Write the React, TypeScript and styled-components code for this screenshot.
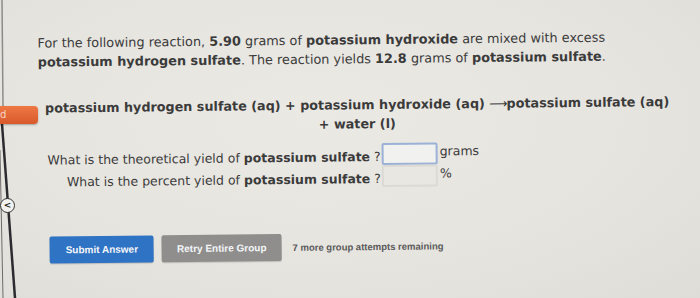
import React from 'react';
import styled, { createGlobalStyle } from 'styled-components';

const GlobalStyle = createGlobalStyle`
  html, body {
    margin: 0;
    padding: 0;
    background: #e7e5e0;
  }
`;

const Screen = styled.div`
  position: relative;
  width: 700px;
  height: 298px;
  overflow: hidden;
  background: radial-gradient(ellipse at 45% 40%, #ebe9e4 0%, #e6e4df 60%, #dfddd8 100%);
  font-family: "DejaVu Sans", Verdana, sans-serif;
  color: #3b3b3b;
`;

const Content = styled.div`
  padding: 34px 0 0 37px;
  transform: rotate(-0.6deg);
  transform-origin: 0 0;
`;

const Intro = styled.p`
  margin: 0;
  width: 590px;
  font-size: 12.85px;
  line-height: 19px;
`;

const Equation = styled.div`
  margin: 27px 0 0 4px;
  width: 630px;
  text-align: center;
  font-size: 12.75px;
  line-height: 19px;
  font-weight: bold;
  white-space: nowrap;
`;

const Arrow = styled.span`
  font-weight: normal;
  letter-spacing: -1px;
`;

const Questions = styled.div`
  display: grid;
  grid-template-columns: 334px 56px auto;
  column-gap: 1px;
  align-items: center;
  margin: 10px 0 0 8px;
  font-size: 12.5px;
`;

const Label = styled.div`
  text-align: right;
  white-space: nowrap;
  padding-top: 5px;
`;

const Field = styled.div<{ $faint?: boolean }>`
  width: 52px;
  height: 18px;
  border: 2px solid ${(p) => (p.$faint ? '#dcdad5' : '#9bb1d6')};
  border-radius: 2px;
  background: ${(p) => (p.$faint ? 'transparent' : '#f1f1ef')};
`;

const Unit = styled.div`
  font-size: 12.5px;
  padding-left: 1px;
  margin-top: -6px;
`;

const Actions = styled.div`
  display: flex;
  align-items: center;
  gap: 8px;
  margin: 46px 0 0 10px;
  font-family: "Liberation Sans", Arial, sans-serif;
`;

const Button = styled.div<{ $tone: 'blue' | 'grey' }>`
  display: flex;
  align-items: center;
  justify-content: center;
  height: 27px;
  padding: 0 ${(p) => (p.$tone === 'blue' ? 16 : 15)}px;
  border-radius: 2px;
  font-size: 10px;
  font-weight: bold;
  color: #f4f6f9;
  background: ${(p) => (p.$tone === 'blue' ? '#2f73c4' : '#8f8e8c')};
  box-shadow: 0 1px 1px rgba(0, 0, 0, 0.15);
`;

const Remaining = styled.span`
  margin-left: 3px;
  font-size: 9.5px;
  font-weight: bold;
  color: #5a5a5a;
`;

const Tab = styled.div`
  position: absolute;
  left: -4px;
  top: 106px;
  width: 42px;
  height: 18px;
  border-radius: 4px;
  background: linear-gradient(#ee7843, #d95a2c);
  box-shadow: 0 1px 2px rgba(0, 0, 0, 0.3);
  font-family: "DejaVu Sans", sans-serif;
  font-size: 10px;
  color: #f7d6c6;
  padding-left: 4px;
  line-height: 17px;
  box-sizing: border-box;
`;

const Bezel = styled.svg`
  position: absolute;
  left: 0;
  top: 0;
`;

const Back = styled.div`
  position: absolute;
  left: 0;
  top: 198px;
  width: 13px;
  height: 13px;
  border-radius: 50%;
  border: 1.5px solid #333;
  background: #f2f2f0;
  font-family: "DejaVu Sans", sans-serif;
  font-size: 9px;
  font-weight: bold;
  line-height: 12px;
  text-align: center;
  color: #222;
`;

export default function App() {
  return (
    <Screen>
      <GlobalStyle />
      <Bezel width="40" height="298" viewBox="0 0 40 298">
        <line x1="2" y1="0" x2="3" y2="106" stroke="#8d8b88" strokeWidth="1.5" />
        <line x1="2" y1="124" x2="15" y2="298" stroke="#2c2c30" strokeWidth="2.5" />
        <line x1="0" y1="150" x2="3" y2="298" stroke="#6d6b6a" strokeWidth="1" />
      </Bezel>
      <Content>
        <Intro>
          For the following reaction, <b>5.90</b> grams of <b>potassium hydroxide</b> are mixed with excess{' '}
          <b>potassium hydrogen sulfate</b>. The reaction yields <b>12.8</b> grams of <b>potassium sulfate</b>.
        </Intro>
        <Equation>
          potassium hydrogen sulfate (aq) + potassium hydroxide (aq) <Arrow>⟶</Arrow>potassium sulfate (aq)
          <br />+ water (l)
        </Equation>
        <Questions>
          <Label>
            What is the theoretical yield of <b>potassium sulfate</b> ?
          </Label>
          <Field />
          <Unit>grams</Unit>
          <Label>
            What is the percent yield of <b>potassium sulfate</b> ?
          </Label>
          <Field $faint />
          <Unit>%</Unit>
        </Questions>
        <Actions>
          <Button $tone="blue">Submit Answer</Button>
          <Button $tone="grey">Retry Entire Group</Button>
          <Remaining>7 more group attempts remaining</Remaining>
        </Actions>
      </Content>
      <Tab>d</Tab>
      <Back>&lt;</Back>
    </Screen>
  );
}
